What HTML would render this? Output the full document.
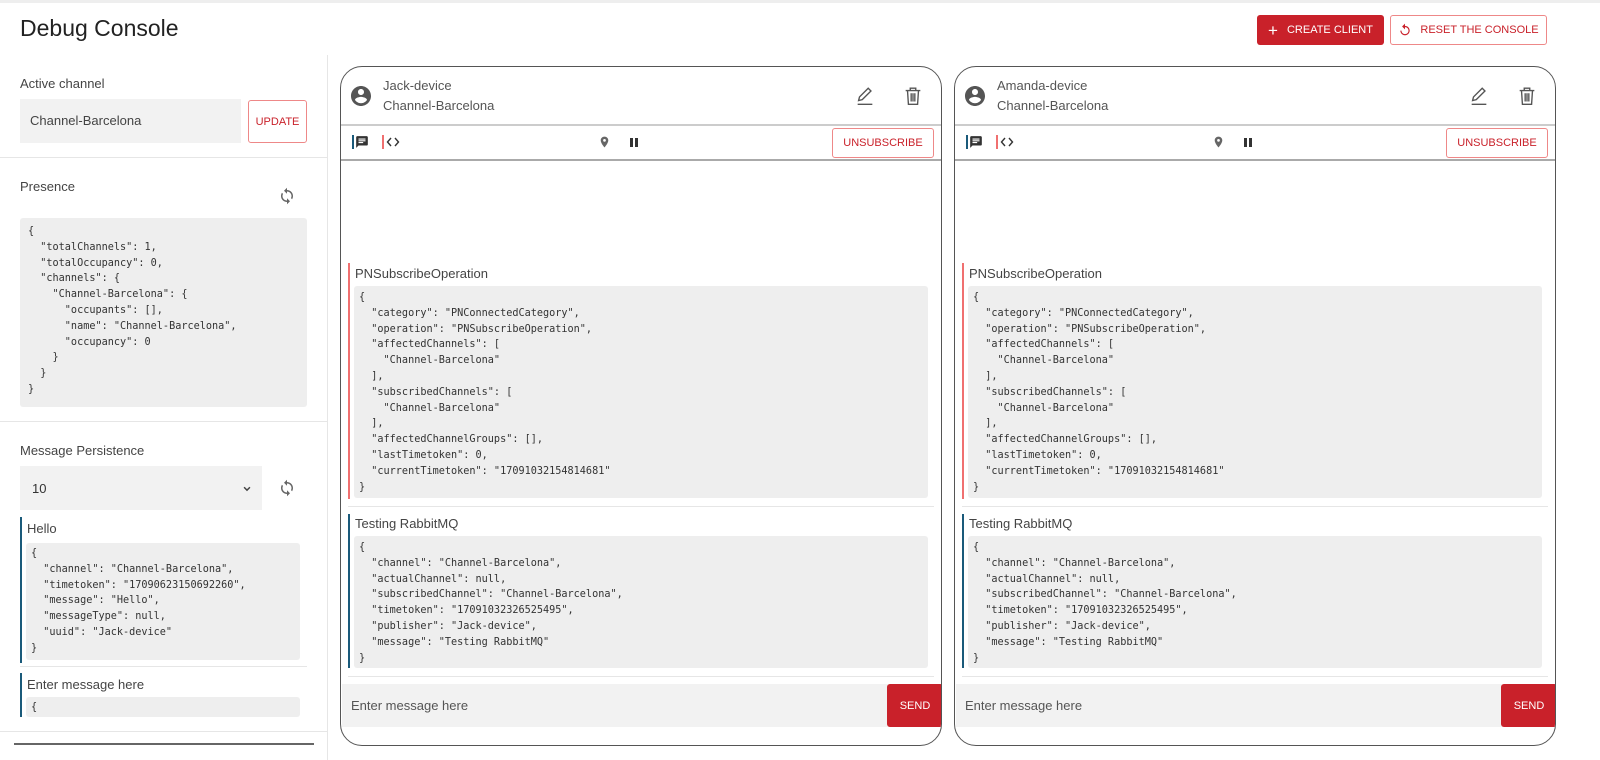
<!DOCTYPE html>
<html><head><meta charset="utf-8"><style>
*{box-sizing:border-box;margin:0;padding:0}
body{width:1600px;height:760px;overflow:hidden;background:#fff;font-family:"Liberation Sans",sans-serif;color:#333;position:relative}
.a{position:absolute}
.lbl{font-size:13px;color:#444}
pre{font-family:"DejaVu Sans Mono","Liberation Mono",monospace;font-size:10.2px;line-height:15.8px;color:#333;background:#eee;border-radius:3px;white-space:pre}
.card{position:absolute;top:66px;width:602px;height:680px;border:1.5px solid #555;border-radius:22px;overflow:hidden;background:#fff}
.btnline{border:1px solid #e88;border-radius:3px;color:#c9212a;font-size:11px;display:flex;align-items:center;justify-content:center}
.hr{position:absolute;height:1px;background:#e6e6e6}
.code{font-size:15px;color:#333;line-height:1}
</style></head><body>
<div class="a" style="left:0;top:0;width:1600px;height:3px;background:#eee"></div>
<div class="a" style="left:20px;top:15px;font-size:23px;color:#222">Debug Console</div>
<div class="a" style="left:1257px;top:15px;width:127px;height:30px;background:#c9212a;border-radius:3px;color:#fff;font-size:11px;display:flex;align-items:center;justify-content:center"><span style="font-size:17px;margin-right:9px;line-height:1">+</span>CREATE CLIENT</div>
<div class="a btnline" style="left:1390px;top:15px;width:157px;height:30px"><svg width="14" height="14" viewBox="0 0 24 24" style="margin-right:8px"><path d="M12 5V1L7 6l5 5V7c3.3 0 6 2.7 6 6s-2.7 6-6 6-6-2.7-6-6H4c0 4.4 3.6 8 8 8s8-3.6 8-8-3.6-8-8-8z" fill="#c9212a"/></svg>RESET THE CONSOLE</div>

<div class="a" style="left:327px;top:55px;width:1px;height:705px;background:#e6e6e6"></div>
<div class="a lbl" style="left:20px;top:76px">Active channel</div>
<div class="a" style="left:20px;top:99px;width:221px;height:44px;background:#f2f2f2;font-size:13px;color:#444;padding:14px 10px">Channel-Barcelona</div>
<div class="a btnline" style="left:248px;top:100px;width:59px;height:43px">UPDATE</div>
<div class="hr" style="left:0;top:157px;width:327px"></div>
<div class="a lbl" style="left:20px;top:179px">Presence</div>
<svg class="a" style="left:278px;top:187px" width="18" height="18" viewBox="0 0 24 24"><path d="M12 4V1L8 5l4 4V6c3.3 0 6 2.7 6 6 0 1-.3 2-.7 2.8l1.5 1.5C19.5 15 20 13.6 20 12c0-4.4-3.6-8-8-8zm0 14c-3.3 0-6-2.7-6-6 0-1 .3-2 .7-2.8L5.2 7.7C4.5 9 4 10.4 4 12c0 4.4 3.6 8 8 8v3l4-4-4-4v3z" fill="#666"/></svg>
<pre class="a" style="left:20px;top:218px;width:287px;height:189px;padding:6px 8px">{
  "totalChannels": 1,
  "totalOccupancy": 0,
  "channels": {
    "Channel-Barcelona": {
      "occupants": [],
      "name": "Channel-Barcelona",
      "occupancy": 0
    }
  }
}</pre>
<div class="hr" style="left:0;top:421px;width:327px"></div>
<div class="a lbl" style="left:20px;top:443px">Message Persistence</div>
<div class="a" style="left:20px;top:466px;width:242px;height:44px;background:#f2f2f2;font-size:13px;color:#333;padding:15px 12px">10</div>
<svg class="a" style="left:240px;top:482px" width="14" height="14" viewBox="0 0 24 24"><path d="M7 9l5 5 5-5" stroke="#444" stroke-width="2.5" fill="none"/></svg>
<svg class="a" style="left:278px;top:479px" width="18" height="18" viewBox="0 0 24 24"><path d="M12 4V1L8 5l4 4V6c3.3 0 6 2.7 6 6 0 1-.3 2-.7 2.8l1.5 1.5C19.5 15 20 13.6 20 12c0-4.4-3.6-8-8-8zm0 14c-3.3 0-6-2.7-6-6 0-1 .3-2 .7-2.8L5.2 7.7C4.5 9 4 10.4 4 12c0 4.4 3.6 8 8 8v3l4-4-4-4v3z" fill="#666"/></svg>
<div class="a" style="left:20px;top:517px;width:2px;height:146px;background:#1a5a7a"></div>
<div class="a lbl" style="left:27px;top:521px">Hello</div>
<pre class="a" style="left:26px;top:543px;width:274px;height:117px;padding:3px 5px">{
  "channel": "Channel-Barcelona",
  "timetoken": "17090623150692260",
  "message": "Hello",
  "messageType": null,
  "uuid": "Jack-device"
}</pre>
<div class="hr" style="left:20px;top:666px;width:287px"></div>
<div class="a" style="left:20px;top:673px;width:2px;height:44px;background:#1a5a7a"></div>
<div class="a lbl" style="left:27px;top:677px">Enter message here</div>
<pre class="a" style="left:26px;top:697px;width:274px;height:20px;padding:3px 5px">{</pre>
<div class="hr" style="left:0;top:731px;width:327px"></div>
<div class="a" style="left:14px;top:743px;width:300px;height:2px;background:#666"></div>

<div class="card" style="left:340px">
 <svg class="a" style="left:8px;top:17px" width="24" height="24" viewBox="0 0 24 24"><path d="M12 2C6.5 2 2 6.5 2 12s4.5 10 10 10 10-4.5 10-10S17.5 2 12 2zm0 3c1.7 0 3 1.3 3 3s-1.3 3-3 3-3-1.3-3-3 1.3-3 3-3zm0 14.2c-2.5 0-4.7-1.3-6-3.2 0-2 4-3.1 6-3.1s6 1.1 6 3.1c-1.3 1.9-3.5 3.2-6 3.2z" fill="#555"/></svg>
 <div class="a lbl" style="left:42px;top:11px;color:#555">Jack-device</div>
 <div class="a lbl" style="left:42px;top:31px;color:#555">Channel-Barcelona</div>
 <svg class="a" style="left:513px;top:18px" width="22" height="22" viewBox="0 0 24 24"><path d="M5 17l1-4L15.5 3.5l3 3L9 16z M4 21h16" stroke="#555" stroke-width="1.5" fill="none"/></svg>
 <svg class="a" style="left:561px;top:18px" width="22" height="22" viewBox="0 0 24 24"><path d="M4 6h16M9 6V3.5h6V6M6 6l1 15h10l1-15M10 9v9M12 9v9M14 9v9" stroke="#555" stroke-width="1.5" fill="none"/></svg>
 <div class="a" style="left:0;top:57px;width:602px;height:1.5px;background:#ccc"></div>
 <div class="a" style="left:11px;top:68px;width:2px;height:14px;background:#1a5a7a"></div>
 <svg class="a" style="left:14px;top:68px" width="14" height="14" viewBox="0 0 24 24"><path d="M20 2H4c-1.1 0-2 .9-2 2v18l4-4h14c1.1 0 2-.9 2-2V4c0-1.1-.9-2-2-2zM6 9h12v2H6zm8 5H6v-2h8zm4-6H6V6h12z" fill="#333"/></svg>
 <div class="a" style="left:41px;top:68px;width:2px;height:14px;background:#f07070"></div>
 <svg class="a" style="left:45px;top:69px" width="14" height="12" viewBox="0 0 14 12"><path d="M5 2L1.5 6 5 10M9 2l3.5 4L9 10" stroke="#333" stroke-width="1.4" fill="none"/></svg>
 <svg class="a" style="left:257px;top:68px" width="13" height="14" viewBox="0 0 24 24"><path d="M12 2C8.1 2 5 5.1 5 9c0 5.2 7 13 7 13s7-7.8 7-13c0-3.9-3.1-7-7-7zm0 9.5a2.5 2.5 0 110-5 2.5 2.5 0 010 5z" fill="#666"/></svg>
 <div class="a" style="left:289px;top:71px;width:2.5px;height:9px;background:#333"></div>
 <div class="a" style="left:294px;top:71px;width:2.5px;height:9px;background:#333"></div>
 <div class="a btnline" style="left:491px;top:61px;width:102px;height:30px">UNSUBSCRIBE</div>
 <div class="a" style="left:0;top:92px;width:602px;height:1.5px;background:#aaa"></div>
 <div class="a" style="left:7px;top:196px;width:2px;height:236px;background:#f07070"></div>
 <div class="a lbl" style="left:14px;top:199px">PNSubscribeOperation</div>
 <pre class="a" style="left:13px;top:219px;width:574px;height:212px;padding:4px 5px">{
  "category": "PNConnectedCategory",
  "operation": "PNSubscribeOperation",
  "affectedChannels": [
    "Channel-Barcelona"
  ],
  "subscribedChannels": [
    "Channel-Barcelona"
  ],
  "affectedChannelGroups": [],
  "lastTimetoken": 0,
  "currentTimetoken": "17091032154814681"
}</pre>
 <div class="hr" style="left:7px;top:439px;width:586px"></div>
 <div class="a" style="left:7px;top:447px;width:2px;height:154px;background:#1a5a7a"></div>
 <div class="a lbl" style="left:14px;top:449px">Testing RabbitMQ</div>
 <pre class="a" style="left:13px;top:469px;width:574px;height:132px;padding:4px 5px">{
  "channel": "Channel-Barcelona",
  "actualChannel": null,
  "subscribedChannel": "Channel-Barcelona",
  "timetoken": "17091032326525495",
  "publisher": "Jack-device",
  "message": "Testing RabbitMQ"
}</pre>
 <div class="hr" style="left:7px;top:609px;width:586px"></div>
 <div class="a" style="left:1px;top:617px;width:546px;height:43px;background:#f2f2f2;font-size:13px;color:#555;padding:14px 9px">Enter message here</div>
 <div class="a" style="left:546px;top:617px;width:56px;height:43px;background:#c9212a;color:#fff;font-size:11px;display:flex;align-items:center;justify-content:center;border-radius:3px">SEND</div>
</div>

<div class="card" style="left:954px">
 <svg class="a" style="left:8px;top:17px" width="24" height="24" viewBox="0 0 24 24"><path d="M12 2C6.5 2 2 6.5 2 12s4.5 10 10 10 10-4.5 10-10S17.5 2 12 2zm0 3c1.7 0 3 1.3 3 3s-1.3 3-3 3-3-1.3-3-3 1.3-3 3-3zm0 14.2c-2.5 0-4.7-1.3-6-3.2 0-2 4-3.1 6-3.1s6 1.1 6 3.1c-1.3 1.9-3.5 3.2-6 3.2z" fill="#555"/></svg>
 <div class="a lbl" style="left:42px;top:11px;color:#555">Amanda-device</div>
 <div class="a lbl" style="left:42px;top:31px;color:#555">Channel-Barcelona</div>
 <svg class="a" style="left:513px;top:18px" width="22" height="22" viewBox="0 0 24 24"><path d="M5 17l1-4L15.5 3.5l3 3L9 16z M4 21h16" stroke="#555" stroke-width="1.5" fill="none"/></svg>
 <svg class="a" style="left:561px;top:18px" width="22" height="22" viewBox="0 0 24 24"><path d="M4 6h16M9 6V3.5h6V6M6 6l1 15h10l1-15M10 9v9M12 9v9M14 9v9" stroke="#555" stroke-width="1.5" fill="none"/></svg>
 <div class="a" style="left:0;top:57px;width:602px;height:1.5px;background:#ccc"></div>
 <div class="a" style="left:11px;top:68px;width:2px;height:14px;background:#1a5a7a"></div>
 <svg class="a" style="left:14px;top:68px" width="14" height="14" viewBox="0 0 24 24"><path d="M20 2H4c-1.1 0-2 .9-2 2v18l4-4h14c1.1 0 2-.9 2-2V4c0-1.1-.9-2-2-2zM6 9h12v2H6zm8 5H6v-2h8zm4-6H6V6h12z" fill="#333"/></svg>
 <div class="a" style="left:41px;top:68px;width:2px;height:14px;background:#f07070"></div>
 <svg class="a" style="left:45px;top:69px" width="14" height="12" viewBox="0 0 14 12"><path d="M5 2L1.5 6 5 10M9 2l3.5 4L9 10" stroke="#333" stroke-width="1.4" fill="none"/></svg>
 <svg class="a" style="left:257px;top:68px" width="13" height="14" viewBox="0 0 24 24"><path d="M12 2C8.1 2 5 5.1 5 9c0 5.2 7 13 7 13s7-7.8 7-13c0-3.9-3.1-7-7-7zm0 9.5a2.5 2.5 0 110-5 2.5 2.5 0 010 5z" fill="#666"/></svg>
 <div class="a" style="left:289px;top:71px;width:2.5px;height:9px;background:#333"></div>
 <div class="a" style="left:294px;top:71px;width:2.5px;height:9px;background:#333"></div>
 <div class="a btnline" style="left:491px;top:61px;width:102px;height:30px">UNSUBSCRIBE</div>
 <div class="a" style="left:0;top:92px;width:602px;height:1.5px;background:#aaa"></div>
 <div class="a" style="left:7px;top:196px;width:2px;height:236px;background:#f07070"></div>
 <div class="a lbl" style="left:14px;top:199px">PNSubscribeOperation</div>
 <pre class="a" style="left:13px;top:219px;width:574px;height:212px;padding:4px 5px">{
  "category": "PNConnectedCategory",
  "operation": "PNSubscribeOperation",
  "affectedChannels": [
    "Channel-Barcelona"
  ],
  "subscribedChannels": [
    "Channel-Barcelona"
  ],
  "affectedChannelGroups": [],
  "lastTimetoken": 0,
  "currentTimetoken": "17091032154814681"
}</pre>
 <div class="hr" style="left:7px;top:439px;width:586px"></div>
 <div class="a" style="left:7px;top:447px;width:2px;height:154px;background:#1a5a7a"></div>
 <div class="a lbl" style="left:14px;top:449px">Testing RabbitMQ</div>
 <pre class="a" style="left:13px;top:469px;width:574px;height:132px;padding:4px 5px">{
  "channel": "Channel-Barcelona",
  "actualChannel": null,
  "subscribedChannel": "Channel-Barcelona",
  "timetoken": "17091032326525495",
  "publisher": "Jack-device",
  "message": "Testing RabbitMQ"
}</pre>
 <div class="hr" style="left:7px;top:609px;width:586px"></div>
 <div class="a" style="left:1px;top:617px;width:546px;height:43px;background:#f2f2f2;font-size:13px;color:#555;padding:14px 9px">Enter message here</div>
 <div class="a" style="left:546px;top:617px;width:56px;height:43px;background:#c9212a;color:#fff;font-size:11px;display:flex;align-items:center;justify-content:center;border-radius:3px">SEND</div>
</div>
</body></html>
